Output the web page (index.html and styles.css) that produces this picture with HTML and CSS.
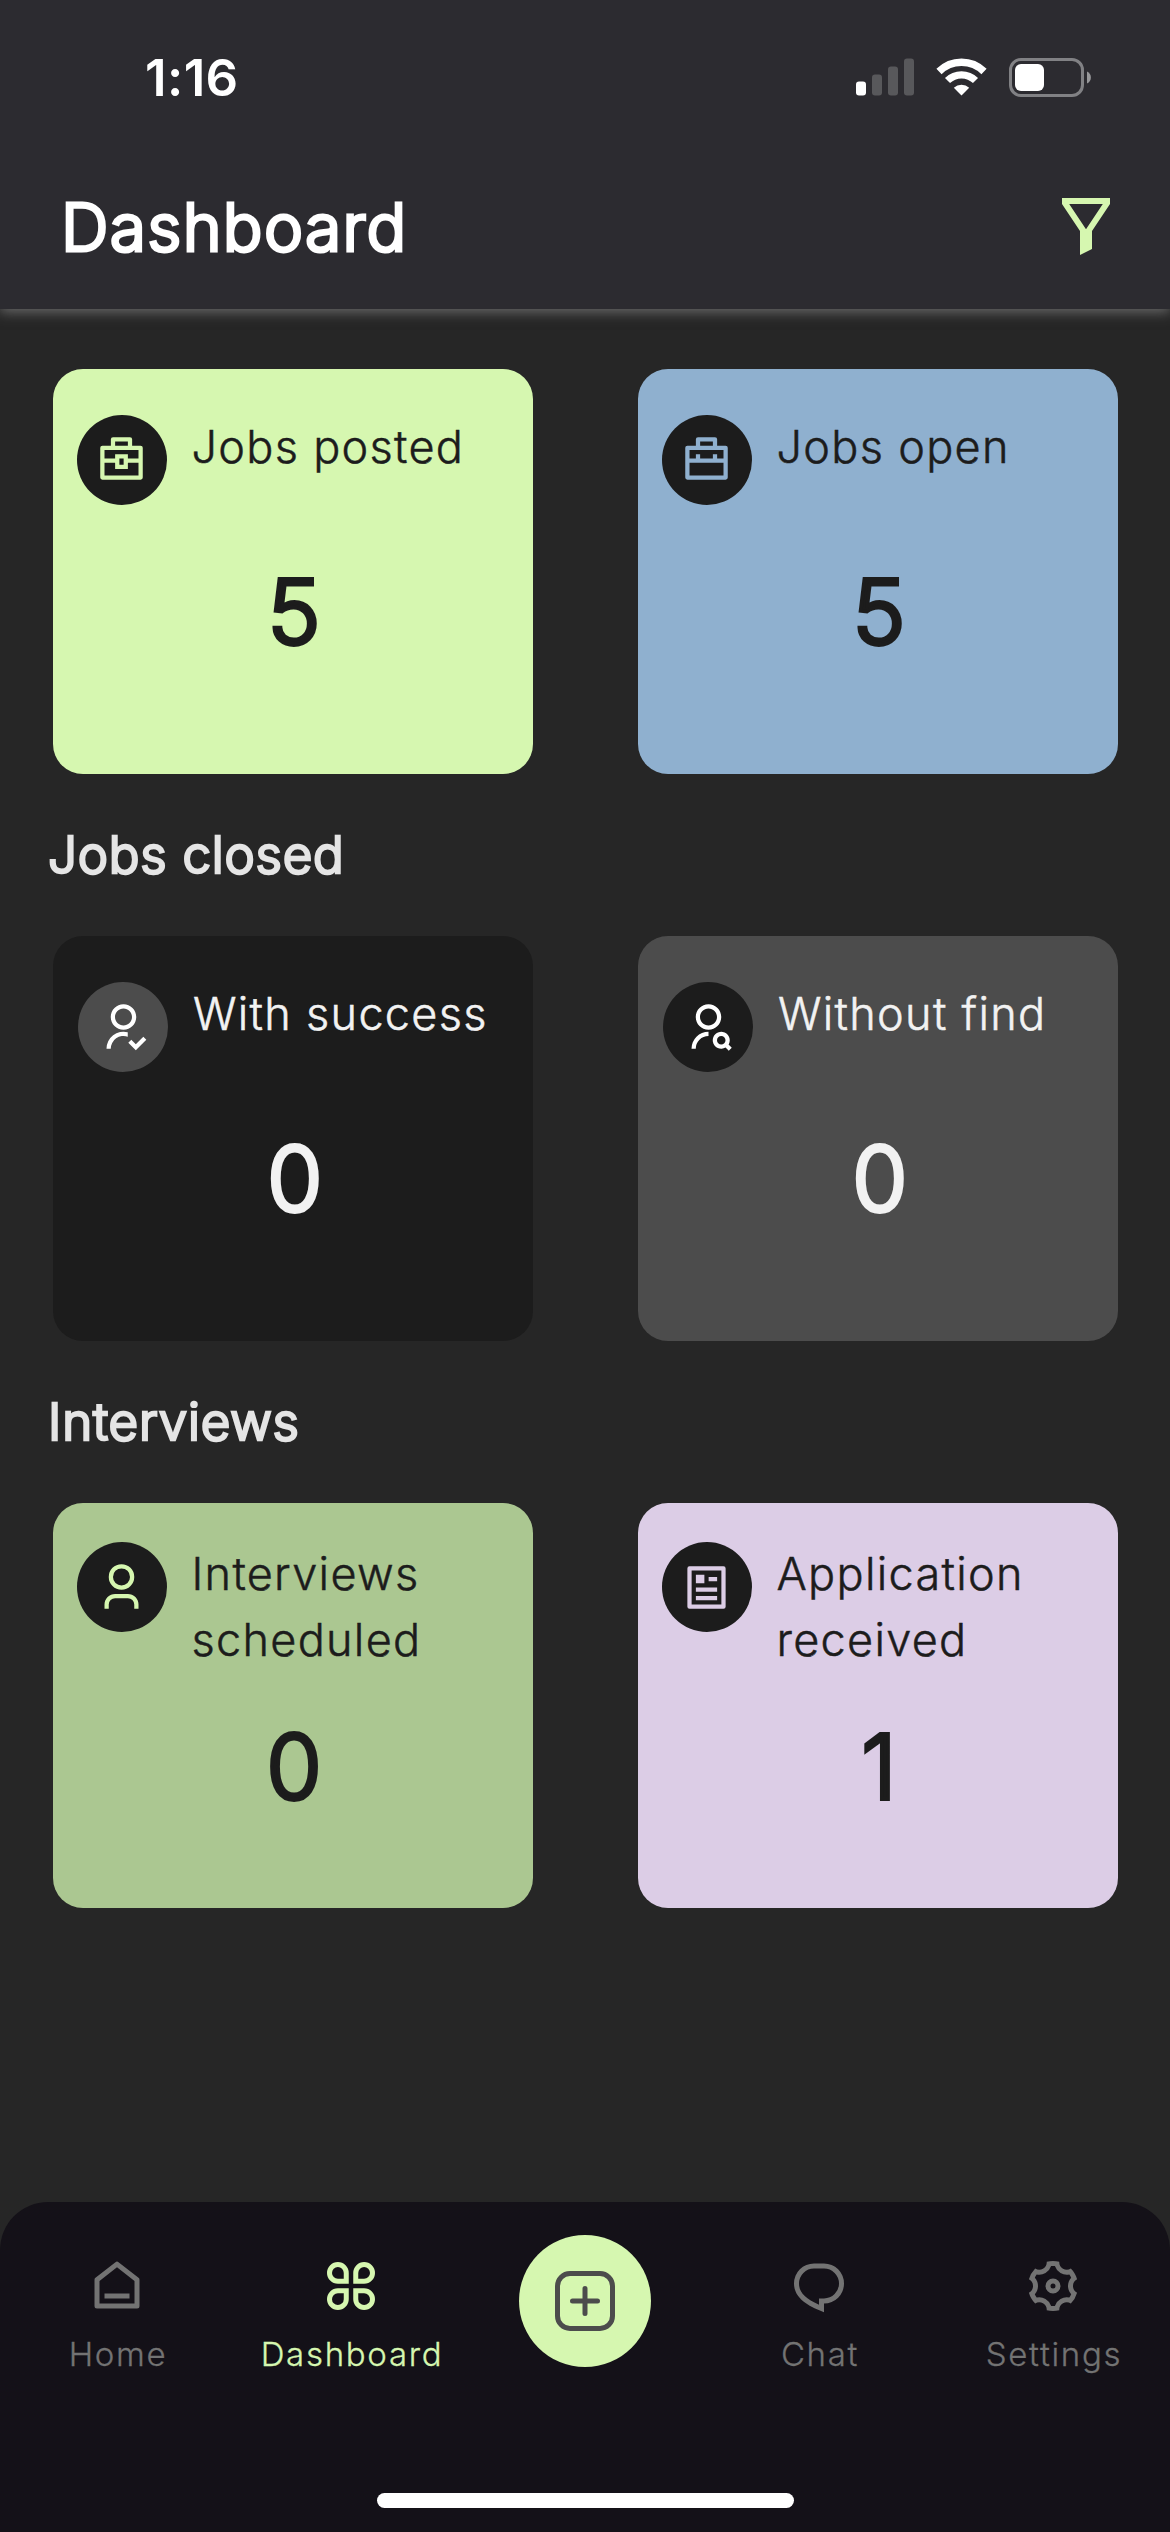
FILE: index.html
```html
<!DOCTYPE html>
<html lang="en">
<head>
    <meta charset="UTF-8">
    <meta name="viewport" content="width=device-width, initial-scale=1.0">
    <title>Dashboard</title>
    <link rel="stylesheet" href="styles.css">
</head>
<body>

<div class="screen">
    <header class="header">
        <div class="status-bar">
            <span class="time">1:16</span>
            <div class="status-icons">
                <svg class="signal" width="58" height="38" viewBox="0 0 58 38">
                    <rect x="0" y="23.5" width="10" height="14" rx="3" fill="#fff"/>
                    <rect x="16" y="16.5" width="10" height="21" rx="3" fill="#58585b"/>
                    <rect x="32" y="8.5" width="10" height="29" rx="3" fill="#58585b"/>
                    <rect x="48" y="0.5" width="10" height="37" rx="3" fill="#58585b"/>
                </svg>
                <svg class="wifi" width="51" height="38" viewBox="0 0 51 38">
                    <path d="M3 13.5a32 32 0 0 1 45 0" fill="none" stroke="#fff" stroke-width="7.4"/>
                    <path d="M11.5 22.5a20 20 0 0 1 28 0" fill="none" stroke="#fff" stroke-width="7.2"/>
                    <path d="M25.5 37.5l-7.7-7.8a11.2 11.2 0 0 1 15.400 0z" fill="#fff"/>
                </svg>
                <svg class="battery" width="82" height="39" viewBox="0 0 82 39">
                    <rect x="1.5" y="1.5" width="72" height="36" rx="10.5" fill="none" stroke="#818184" stroke-width="3"/>
                    <rect x="6" y="6" width="29" height="27" rx="6" fill="#fff"/>
                    <path d="M78 13.5a6.6 6.6 0 0 1 0 12z" fill="#98989a"/>
                </svg>
            </div>
        </div>
        <div class="title-bar">
            <h1>Dashboard</h1>
            <svg class="filter" width="72" height="72" viewBox="0 0 24 24">
                <path d="M14 14v6l-4 2v-8L4 5V3h16v2zM6.4 5L12 13.4 17.6 5z" fill="#d6f7b0"/>
            </svg>
        </div>
    </header>

    <main class="content">
        <section class="cards">
            <div class="card card-lime">
                <div class="card-head">
                    <span class="badge">
                        <svg viewBox="0 0 24 24"><path fill-rule="evenodd" d="M7 5V2a1 1 0 0 1 1-1h8a1 1 0 0 1 1 1v3h4a1 1 0 0 1 1 1v14a1 1 0 0 1-1 1H3a1 1 0 0 1-1-1V6a1 1 0 0 1 1-1zM9 3v2h6V3zM4 7v4h5V9h6v2h5V7zM4 13v6h16v-6h-5v3H9v-3zM11 11v3h2v-3z"/></svg>
                    </span>
                    <span class="label">Jobs posted</span>
                </div>
                <div class="count">5</div>
            </div>
            <div class="card card-blue">
                <div class="card-head">
                    <span class="badge">
                        <svg viewBox="0 0 24 24"><path fill-rule="evenodd" d="M7 5V2a1 1 0 0 1 1-1h8a1 1 0 0 1 1 1v3h4a1 1 0 0 1 1 1v14a1 1 0 0 1-1 1H3a1 1 0 0 1-1-1V6a1 1 0 0 1 1-1zM9 3v2h6V3zM4 7v4h3V9h2v2h6V9h2v2h3V7zM4 13v6h16v-6z"/></svg>
                    </span>
                    <span class="label">Jobs open</span>
                </div>
                <div class="count">5</div>
            </div>
        </section>

        <h2>Jobs closed</h2>
        <section class="cards">
            <div class="card card-black">
                <div class="card-head">
                    <span class="badge">
                        <svg viewBox="0 0 24 24"><path d="M14 14.252v2.09A6 6 0 0 0 6 22H4a8 8 0 0 1 10-7.748zM12 13c-3.315 0-6-2.685-6-6s2.685-6 6-6 6 2.685 6 6-2.685 6-6 6zm0-2c2.21 0 4-1.79 4-4s-1.79-4-4-4-4 1.79-4 4 1.79 4 4 4zm5.793 8.914l3.535-3.535 1.415 1.414-4.95 4.95-3.536-3.536 1.415-1.414z"/></svg>
                    </span>
                    <span class="label">With success</span>
                </div>
                <div class="count">0</div>
            </div>
            <div class="card card-gray">
                <div class="card-head">
                    <span class="badge">
                        <svg viewBox="0 0 24 24"><path d="M12 14v2a6 6 0 0 0-6 6H4a8 8 0 0 1 8-8zm0-1c-3.315 0-6-2.685-6-6s2.685-6 6-6 6 2.685 6 6-2.685 6-6 6zm0-2c2.21 0 4-1.79 4-4s-1.79-4-4-4-4 1.79-4 4 1.79 4 4 4zm9.446 9.032l1.504 1.503-1.415 1.415-1.503-1.504a4 4 0 1 1 1.414-1.414zM18 20a2 2 0 1 0 0-4 2 2 0 0 0 0 4z"/></svg>
                    </span>
                    <span class="label">Without find</span>
                </div>
                <div class="count">0</div>
            </div>
        </section>

        <h2>Interviews</h2>
        <section class="cards">
            <div class="card card-green card-tall">
                <div class="card-head">
                    <span class="badge">
                        <svg viewBox="0 0 24 24"><path d="M20 22h-2v-2a3 3 0 0 0-3-3H9a3 3 0 0 0-3 3v2H4v-2a5 5 0 0 1 5-5h6a5 5 0 0 1 5 5v2zm-8-9a6 6 0 1 1 0-12 6 6 0 0 1 0 12zm0-2a4 4 0 1 0 0-8 4 4 0 0 0 0 8z"/></svg>
                    </span>
                    <span class="label">Interviews<br>scheduled</span>
                </div>
                <div class="count">0</div>
            </div>
            <div class="card card-purple card-tall">
                <div class="card-head">
                    <span class="badge">
                        <svg viewBox="0 0 24 24"><path fill-rule="evenodd" d="M20 22H4a1 1 0 0 1-1-1V3a1 1 0 0 1 1-1h16a1 1 0 0 1 1 1v18a1 1 0 0 1-1 1zM5 4v16h14V4zM7 6h4v4H7zM13 7h4v2h-4zM7 12h10v2H7zM7 16h10v2H7z"/></svg>
                    </span>
                    <span class="label">Application<br>received</span>
                </div>
                <div class="count">1</div>
            </div>
        </section>
    </main>

    <nav class="tab-bar">
        <div class="tabs">
            <a class="tab">
                <svg viewBox="0 0 24 24"><path d="M21 20a1 1 0 0 1-1 1H4a1 1 0 0 1-1-1V9.489a1 1 0 0 1 .386-.79l8-6.222a1 1 0 0 1 1.228 0l8 6.222a1 1 0 0 1 .386.79V20zm-2-1V9.978l-7-5.444-7 5.444V19h14zM7 15h10v2H7v-2z"/></svg>
                <span>Home</span>
            </a>
            <a class="tab active">
                <svg viewBox="0 0 24 24"><g fill="none" stroke="currentColor" stroke-width="2">
                    <path d="M10.1 10.1V6.75a3.35 3.35 0 1 0-3.35 3.35z"/>
                    <path d="M13.9 10.1V6.75a3.35 3.35 0 1 1 3.35 3.35z"/>
                    <path d="M10.1 13.9v3.35a3.35 3.35 0 1 1-3.35-3.35z"/>
                    <path d="M13.9 13.9v3.35a3.35 3.35 0 1 0 3.35-3.35z"/>
                </g></svg>
                <span>Dashboard</span>
            </a>
            <a class="add">
                <svg width="60" height="60" viewBox="0 0 60 60" fill="none" stroke="#4c4c4c" stroke-width="5" stroke-linecap="round">
                    <rect x="2.5" y="2.5" width="55" height="55" rx="12.5"/>
                    <path d="M30 17.5v25M17.5 30h25"/>
                </svg>
            </a>
            <a class="tab">
                <svg viewBox="0 0 24 24"><path d="M10 3h4a8 8 0 1 1 0 16v3.5c-5-2-12-5-12-11.5a8 8 0 0 1 8-8zm2 14h2a6 6 0 1 0 0-12h-4a6 6 0 0 0-6 6c0 3.61 2.462 5.966 8 8.48V17z"/></svg>
                <span>Chat</span>
            </a>
            <a class="tab">
                <svg viewBox="0 0 24 24"><path d="M3.34 17a10.018 10.018 0 0 1-.978-2.326 3 3 0 0 0 .002-5.347A9.99 9.99 0 0 1 4.865 4.99a3 3 0 0 0 4.631-2.674 9.99 9.99 0 0 1 5.007.002 3 3 0 0 0 4.632 2.672c.579.59 1.093 1.261 1.525 2.01.433.749.757 1.53.978 2.326a3 3 0 0 0-.002 5.347 9.99 9.99 0 0 1-2.501 4.337 3 3 0 0 0-4.631 2.674 9.99 9.99 0 0 1-5.007-.002 3 3 0 0 0-4.632-2.672A10.018 10.018 0 0 1 3.34 17zm5.66.196a4.993 4.993 0 0 1 2.25 2.77c.499.047 1 .048 1.499.001A4.993 4.993 0 0 1 15 17.197a4.993 4.993 0 0 1 3.525-.565c.29-.408.54-.843.748-1.298A4.993 4.993 0 0 1 18 12c0-1.26.47-2.437 1.273-3.334a8.126 8.126 0 0 0-.75-1.298A4.993 4.993 0 0 1 15 6.804a4.993 4.993 0 0 1-2.25-2.77c-.499-.047-1-.048-1.499-.001A4.993 4.993 0 0 1 9 6.803a4.993 4.993 0 0 1-3.525.565 7.99 7.99 0 0 0-.748 1.298A4.993 4.993 0 0 1 6 12c0 1.26-.47 2.437-1.273 3.334a8.126 8.126 0 0 0 .75 1.298A4.993 4.993 0 0 1 9 17.196zM12 15a3 3 0 1 1 0-6 3 3 0 0 1 0 6zm0-2a1 1 0 1 0 0-2 1 1 0 0 0 0 2z"/></svg>
                <span>Settings</span>
            </a>
        </div>
        <div class="home-indicator"></div>
    </nav>
</div>

</body>
</html>
```
FILE: styles.css
```css
/* Root colors */
:root {
    --lime: #d6f7b0;
    --blue: #8fb0cf;
    --green: #abc791;
    --purple: #dccde6;
    --black: #1c1c1c;
    --gray: #4c4c4c;
    --header: #2c2b30;
    --background: #262626;
    --tab-bar: #141118;
    --muted: #737373;
}

* {
    box-sizing: border-box;
}

body {
    margin: 0;
    font-family: Inter, sans-serif;
    font-weight: 300;
    background: var(--background);
}

.screen {
    width: 1170px;
    height: 2532px;
    display: flex;
    flex-direction: column;
    overflow: hidden;
}

/* Header */
.header {
    height: 309px;
    background: var(--header);
    box-shadow: 0 3px 12px #6a6a6a;
}

.status-bar {
    display: flex;
    justify-content: space-between;
    height: 141px;
    padding: 58px 79px 0 145px;
}

.time {
    font-size: 51px;
    font-weight: 600;
    line-height: 40px;
    letter-spacing: 0.4px;
    color: #fff;
}

.status-icons {
    display: flex;
}

.wifi {
    margin-left: 22px;
}

.battery {
    margin-left: 22px;
}

.title-bar {
    display: flex;
    justify-content: space-between;
    padding: 48px 48px 0 61px;
}

/* Light weight, thickened with a stroke */
h1 {
    margin: 0;
    font-size: 66px;
    font-weight: 300;
    line-height: 76px;
    letter-spacing: 1.3px;
    color: #fff;
    -webkit-text-stroke: 3.2px #fff;
}

/* Cards */
.content {
    flex: 1;
    padding: 60px 52.5px 0;
}

.cards {
    display: grid;
    grid-template-columns: 480px 480px;
    justify-content: space-between;
}

.card {
    height: 405px;
    padding: 46px 24px 0;
    border-radius: 30px;
    color: var(--black);
}

.card-tall {
    padding-top: 39px;
}

.card-head {
    display: flex;
    gap: 25px;
    height: 150px;
}

.card-tall .card-head {
    height: 178px;
}

.badge {
    display: flex;
    align-items: center;
    justify-content: center;
    width: 90px;
    height: 90px;
    border-radius: 50%;
    background: var(--black);
}

.badge svg {
    width: 51px;
    height: 51px;
    fill: currentColor;
}

.label {
    margin-top: -1px;
    font-size: 45px;
    line-height: 66px;
    letter-spacing: 1.3px;
    -webkit-text-stroke: 0.5px currentColor;
}

.count {
    margin-left: 3px;
    font-size: 90px;
    line-height: 94px;
    text-align: center;
    -webkit-text-stroke: 3.8px currentColor;
}

.card-lime {
    background: var(--lime);
}

.card-lime .badge,
.card-green .badge {
    color: var(--lime);
}

.card-blue {
    background: var(--blue);
}

.card-blue .badge {
    color: var(--blue);
}

.card-black,
.card-gray {
    padding-left: 25.5px;
    color: #f2f2f2;
}

.card-black .badge,
.card-gray .badge {
    color: #fff;
}

.card-black {
    background: var(--black);
}

.card-black .badge {
    background: var(--gray);
}

.card-gray {
    background: var(--gray);
}

.card-green {
    background: var(--green);
}

.card-purple {
    background: var(--purple);
}

.card-purple .badge {
    color: var(--purple);
}

h2 {
    height: 162px;
    margin: 0 0 0 -4.5px;
    font-size: 51px;
    font-weight: 300;
    line-height: 162px;
    letter-spacing: 0.8px;
    color: #e5e5e5;
    -webkit-text-stroke: 2.6px #e5e5e5;
}

/* Tab bar */
.tab-bar {
    height: 330px;
    border-radius: 48px 48px 0 0;
    background: var(--tab-bar);
}

.tabs {
    display: grid;
    grid-template-columns: repeat(5, 1fr);
    height: 291px;
    padding-top: 33px;
}

.tab {
    display: flex;
    flex-direction: column;
    align-items: center;
    padding-top: 21px;
    font-size: 33px;
    line-height: 40px;
    letter-spacing: 1.7px;
    color: var(--muted);
}

.tab span {
    padding-left: 2px;
    -webkit-text-stroke: 0.3px currentColor;
}

.tab svg {
    width: 60px;
    height: 60px;
    margin-bottom: 18px;
    fill: currentColor;
}

.tab.active {
    color: var(--lime);
}

.add {
    display: flex;
    align-items: center;
    justify-content: center;
    justify-self: center;
    width: 132px;
    height: 132px;
    border-radius: 50%;
    background: var(--lime);
}

.home-indicator {
    width: 417px;
    height: 15px;
    margin: 0 auto;
    border-radius: 8px;
    background: #fff;
}
```
